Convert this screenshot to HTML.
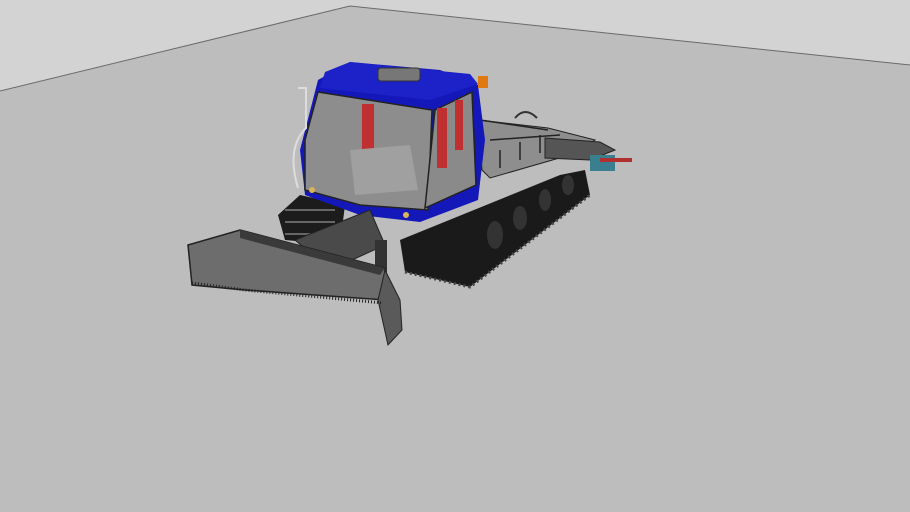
<!DOCTYPE html>
<html><head><meta charset="utf-8"><style>html,body{margin:0;padding:0;width:910px;height:512px;overflow:hidden;background:#bdbdbd}</style></head>
<body>
<svg width="910" height="512" viewBox="0 0 910 512" xmlns="http://www.w3.org/2000/svg">
<rect width="910" height="512" fill="#bdbdbd"/>
<polygon points="0,0 910,0 910,65 350,6 0,91" fill="#d3d3d3"/>
<polyline points="0,91 350,6 910,65" fill="none" stroke="#6a6a6a" stroke-width="1"/>
<!-- rear deck -->
<polygon points="478,120 548,128 595,140 580,152 490,178 482,170" fill="#8e8e8e" stroke="#222" stroke-width="1"/>
<path d="M480,120 L548,130 M490,140 L560,135 M500,168 v-18 M520,160 v-18 M540,153 v-18" stroke="#222" stroke-width="1.5" fill="none"/>
<polygon points="545,138 600,142 615,150 590,160 545,158" fill="#555" stroke="#222"/>
<rect x="590" y="155" width="25" height="16" fill="#3a7f90"/>
<rect x="600" y="158" width="32" height="4" fill="#b03030"/>
<path d="M515,118 q10,-12 22,0" stroke="#333" fill="none" stroke-width="2"/>
<!-- right track -->
<polygon points="400,240 560,175 585,170 590,195 470,287 405,272" fill="#1a1a1a"/>
<path d="M405,272 L470,287 L590,195" stroke="#444" stroke-width="3" fill="none" stroke-dasharray="2 3"/>
<ellipse cx="495" cy="235" rx="8" ry="14" fill="#333"/><ellipse cx="520" cy="218" rx="7" ry="12" fill="#333"/><ellipse cx="545" cy="200" rx="6" ry="11" fill="#333"/><ellipse cx="568" cy="185" rx="6" ry="10" fill="#333"/>
<!-- left track -->
<polygon points="278,215 300,195 345,205 340,245 285,240" fill="#1c1c1c"/>
<path d="M285,210 h50 M285,222 h50 M285,234 h50" stroke="#666" stroke-width="2"/>
<!-- cab body -->
<polygon points="318,80 350,62 440,70 478,85 485,140 478,200 420,222 360,215 305,195 300,150" fill="#1518b8"/>
<polygon points="325,72 350,62 470,74 478,84 430,100 320,88" fill="#1d22c8"/>
<rect x="378" y="68" width="42" height="13" rx="3" fill="#777" stroke="#333"/>
<!-- windshield -->
<polygon points="318,92 432,110 428,210 360,205 305,190 305,140" fill="#8d8d8d" stroke="#222" stroke-width="1.5"/>
<polygon points="435,110 472,92 476,185 425,208" fill="#8a8a8a" stroke="#222" stroke-width="1.5"/>
<rect x="362" y="104" width="12" height="50" fill="#c03030"/>
<rect x="437" y="108" width="10" height="60" fill="#c03030"/>
<rect x="455" y="100" width="8" height="50" fill="#c03030"/>
<polygon points="350,150 410,145 418,190 355,195" fill="#a0a0a0"/>
<rect x="478" y="76" width="10" height="12" fill="#e07a10"/>
<circle cx="312" cy="190" r="3" fill="#d9b55a"/><circle cx="406" cy="215" r="3" fill="#d9b55a"/>
<path d="M298,88 h8 v40 q-20,20 -8,60" stroke="#ddd" stroke-width="2" fill="none"/>
<!-- blade arm -->
<polygon points="295,240 370,210 385,245 330,270" fill="#4a4a4a" stroke="#222"/>
<rect x="375" y="240" width="12" height="35" fill="#333"/>
<!-- blade -->
<polygon points="188,245 240,230 385,268 385,300 245,290 192,285" fill="#6d6d6d" stroke="#222" stroke-width="1.5"/>
<polygon points="240,230 385,268 380,275 240,238" fill="#3a3a3a"/>
<polygon points="385,270 400,300 402,330 388,345 378,300" fill="#5a5a5a" stroke="#222"/>
<path d="M192,283 L245,290 L383,303" stroke="#222" stroke-width="3" stroke-dasharray="1 2" fill="none"/>
</svg>
</body></html>
